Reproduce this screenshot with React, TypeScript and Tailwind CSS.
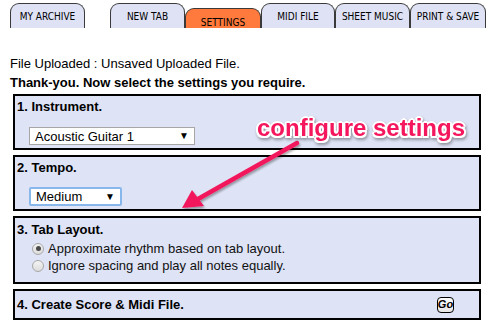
import type { ReactNode } from "react";

const TABS = [
    { label: "MY ARCHIVE", className: "w-[75px]" },
    { label: "NEW TAB", className: "ml-[25px] w-[75px]" },
    { label: "SETTINGS", className: "w-[76px]", active: true },
    { label: "MIDI FILE", className: "w-[74px]" },
    { label: "SHEET MUSIC", className: "w-[75px]" },
    { label: "PRINT & SAVE", className: "w-[76px]" },
];

function Tab({ label, className, active }: { label: string; className: string; active?: boolean }) {
    if (active) {
        return (
            <div className={`${className} h-[20px] rounded-t-[9px] border-[1.5px] border-b-0 border-[#3a3a3a] bg-[#ff7a3c] pt-[8px] text-center text-[10px] leading-[12px] text-black`}>
                {label}
            </div>
        );
    }
    return (
        <div className={`${className} h-[25px] rounded-t-[9px] border-[1.5px] border-b-0 border-[#3a3a3a] bg-[#dee2f4] pt-[7px] text-center text-[10px] leading-[12px] text-black`}>
            {label}
        </div>
    );
}

function Section({ title, className, children }: { title: string; className: string; children?: ReactNode }) {
    return (
        <section className={`${className} w-[468px] border-2 border-black bg-[#dee3f5] px-[2px]`}>
            <div className="text-[13px] font-bold leading-[16px]">{title}</div>
            {children}
        </section>
    );
}

function FakeSelect({ value, className }: { value: string; className: string }) {
    return (
        <div className={`${className} flex items-center justify-between bg-white pl-[5px] pr-[5px] text-[13px] leading-[15px] text-black`}>
            <span>{value}</span>
            <span className="text-[10px] leading-none">▼</span>
        </div>
    );
}

function Radio({ checked, label }: { checked?: boolean; label: string }) {
    return (
        <div className="flex h-[17px] items-center pl-[15px]">
            <span className="flex h-[12px] w-[12px] items-center justify-center rounded-full border border-[#a8a8a8] bg-gradient-to-b from-[#f4f4f4] to-[#dcdcdc]">
                {checked && <span className="h-[5px] w-[5px] rounded-full bg-[#4a4a4a]" />}
            </span>
            <span className="ml-[4px] text-[13px] leading-[15px] text-[#111]">{label}</span>
        </div>
    );
}

export default function App() {
    return (
        <div className="relative h-[327px] w-[500px] overflow-hidden bg-white text-black [font-family:'Liberation_Sans',Arial,sans-serif]">
            <div className="flex h-[28px] items-end pl-[10px] pt-[3px] [font-family:'DejaVu_Sans_Condensed','DejaVu_Sans',sans-serif]">
                {TABS.map((t) => (
                    <Tab key={t.label} {...t} />
                ))}
            </div>

            <div className="pl-[10px] pt-[27px] text-[13px] leading-[18px]">File Uploaded : Unsaved Uploaded File.</div>
            <div className="pl-[10px] pt-[1px] text-[13px] font-bold leading-[18px]">Thank-you. Now select the settings you require.</div>

            <div className="ml-[13px] mt-[2px] flex flex-col gap-[5px]">
                <Section title="1. Instrument." className="h-[56px] pt-[3px]">
                    <FakeSelect value="Acoustic Guitar 1" className="ml-[12px] mt-[12px] h-[18px] w-[166px] border border-[#a6a6a6]" />
                </Section>
                <Section title="2. Tempo." className="h-[56px] pt-[3px]">
                    <FakeSelect value="Medium" className="ml-[12px] mt-[11px] h-[19px] w-[93px] rounded-[2px] border-2 border-[#88b7ec]" />
                </Section>
                <Section title="3. Tab Layout." className="h-[68px] pt-[4px]">
                    <div className="mt-[2px]">
                        <Radio checked label="Approximate rhythm based on tab layout." />
                        <Radio label="Ignore spacing and play all notes equally." />
                    </div>
                </Section>
                <section className="flex h-[31px] w-[468px] items-center justify-between border-2 border-black bg-[#dee3f5] pl-[2px] pr-[25px]">
                    <div className="text-[13px] font-bold leading-[16px]">4. Create Score &amp; Midi File.</div>
                    <button className="flex h-[16px] w-[17px] items-center justify-center rounded-[4px] border-[1.5px] border-black bg-gradient-to-b from-white to-[#e6e6e6] text-[11px] font-bold italic leading-none text-black">
                        Go
                    </button>
                </section>
            </div>

            <svg className="pointer-events-none absolute inset-0" width="500" height="327" viewBox="0 0 500 327">
                <defs>
                    <filter id="sh" x="-20%" y="-20%" width="140%" height="140%">
                        <feDropShadow dx="1" dy="2" stdDeviation="1.2" floodColor="#000" floodOpacity="0.35" />
                    </filter>
                </defs>
                <g filter="url(#sh)">
                    <line x1="297" y1="143" x2="198" y2="199" stroke="#f2185c" strokeWidth="4.5" strokeLinecap="round" />
                    <polygon points="182,208 192,190 204,206" fill="#f2185c" />
                </g>
            </svg>

            <div className="absolute left-[257px] top-[113px] text-[24px] font-bold leading-[30px] text-[#f5175d] [filter:drop-shadow(1px_2px_1.5px_rgba(0,0,0,0.35))] [text-shadow:2px_0_0_#fff,-2px_0_0_#fff,0_2px_0_#fff,0_-2px_0_#fff,1.5px_1.5px_0_#fff,-1.5px_-1.5px_0_#fff,1.5px_-1.5px_0_#fff,-1.5px_1.5px_0_#fff]">
                configure settings
            </div>
        </div>
    );
}
